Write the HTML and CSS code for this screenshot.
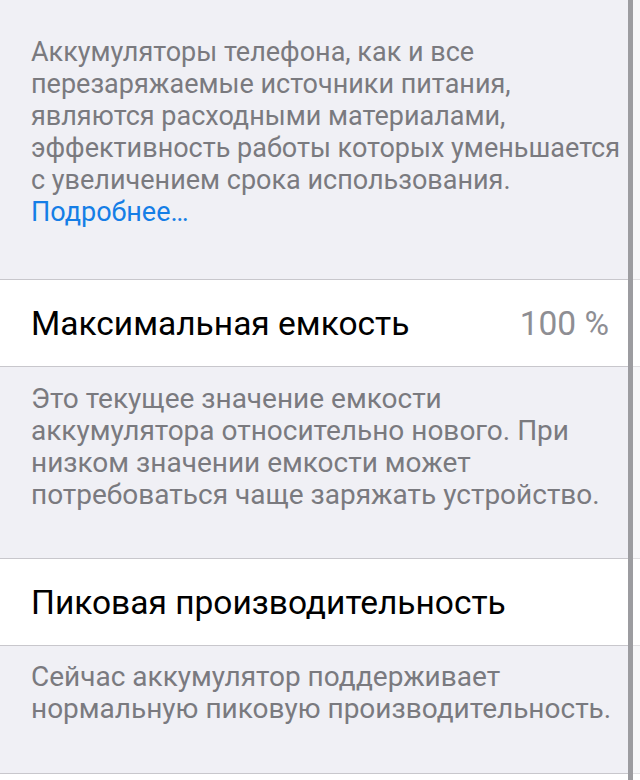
FILE: index.html
```html
<!DOCTYPE html>
<html lang="ru">
<head>
<meta charset="utf-8">
<title>Состояние аккумулятора</title>
<link rel="stylesheet" href="styles.css">
</head>
<body>
<div class="screen">
  <p class="footer footer-intro">Аккумуляторы телефона, как и все перезаряжаемые источники питания, являются расходными материалами, эффективность работы которых уменьшается с увеличением срока использования. <a class="link" href="#">Подробнее…</a></p>

  <div class="group">
    <div class="cell">
      <span class="cell-title">Максимальная емкость</span>
      <span class="cell-value">100 %</span>
    </div>
  </div>
  <p class="footer footer-capacity">Это текущее значение емкости аккумулятора относительно нового. При низком значении емкости может потребоваться чаще заряжать устройство.</p>

  <div class="group">
    <div class="cell">
      <span class="cell-title">Пиковая производительность</span>
    </div>
  </div>
  <p class="footer footer-peak">Сейчас аккумулятор поддерживает нормальную пиковую производительность.</p>

  <div class="group group-next"></div>

  <div class="scroll-indicator"></div>
  <div class="edge"></div>
</div>
</body>
</html>
```

FILE: styles.css
```css
html, body {
  margin: 0;
  padding: 0;
}

body {
  background: #f0f0f5;
  font-family: Roboto, "Noto Sans", "Liberation Sans", sans-serif;
  -webkit-font-smoothing: antialiased;
}

.screen {
  position: relative;
  width: 640px;
  height: 780px;
  overflow: hidden;
  display: flex;
  flex-direction: column;
}

.footer {
  margin: 0;
  width: 582px;
  padding: 0 0 0 31px;
  font-size: 28px;
  line-height: 32px;
  color: #7a7a7f;
}

.footer-intro {
  width: 592px;
  font-size: 27px;
  padding-top: 36px;
  margin-bottom: 51px;
}

.footer-capacity {
  padding-top: 16px;
  margin-bottom: 47px;
}

.footer-peak {
  padding-top: 15px;
  margin-bottom: 48px;
}

.link {
  display: block;
  color: #157ee6;
  text-decoration: none;
}

.group {
  background: #ffffff;
  border-top: 1px solid #c8c7cc;
  border-bottom: 1px solid #c8c7cc;
}

.group-next {
  border-bottom: none;
  flex: 1;
}

.cell {
  height: 86px;
  display: flex;
  align-items: center;
  justify-content: space-between;
  padding: 0 31px 0 31px;
}

.cell-title {
  font-size: 33.5px;
  color: #000000;
}

.cell-value {
  font-size: 33.5px;
  color: #8e8e93;
}

/* scroll indicator overlaid on the right edge */
.scroll-indicator {
  position: absolute;
  top: 0;
  right: 7px;
  width: 5px;
  height: 100%;
  background: #9c9ca0;
}

.edge {
  position: absolute;
  top: 0;
  right: 0;
  width: 7px;
  height: 100%;
  background: rgba(255, 255, 255, 0.45);
}
```
